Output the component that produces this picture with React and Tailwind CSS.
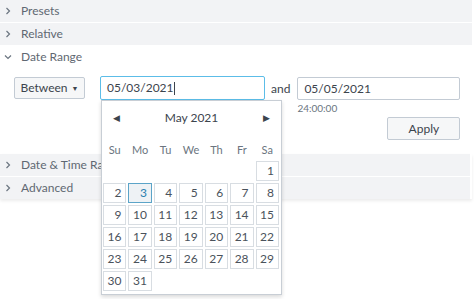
import React from "react";

const font = { fontFamily: "Lato, 'Open Sans', Arial, sans-serif" };

function Chevron({ open }) {
  return (
    <svg width="8" height="8" viewBox="0 0 8 8" className="shrink-0">
      {open ? (
        <path d="M1 2.5 L4 5.5 L7 2.5" fill="none" stroke="#6b7580" strokeWidth="1.2" />
      ) : (
        <path d="M2.5 1 L5.5 4 L2.5 7" fill="none" stroke="#6b7580" strokeWidth="1.2" />
      )}
    </svg>
  );
}

function Section({ label, open, white }) {
  return (
    <div
      className={`h-[22px] mr-[2px] flex items-center gap-[9px] pl-[4px] text-[12px] text-[#5f6872] ${
        white ? "bg-white" : "bg-[#f2f3f5]"
      }`}
    >
      <Chevron open={open} />
      <span>{label}</span>
    </div>
  );
}

const weekdays = ["Su", "Mo", "Tu", "We", "Th", "Fr", "Sa"];

function Calendar() {
  const cells = [];
  for (let i = 0; i < 6; i++) cells.push(null);
  for (let d = 1; d <= 31; d++) cells.push(d);

  return (
    <div className="absolute left-[1px] top-full w-[181px] h-[195px] bg-white border border-[#c8ced5] shadow-[0_2px_4px_rgba(0,0,0,0.15)] z-10">
      <div className="h-[33px] flex items-center justify-between px-[11px] text-[#3c444d]">
        <span className="text-[9px]">◀</span>
        <span className="text-[12px]">May 2021</span>
        <span className="text-[9px]">▶</span>
      </div>
      <div className="mt-[6px] grid grid-cols-7 gap-x-[2px] w-[176px] ml-[1px] h-[20px] leading-[20px] text-[11px] text-[#6b7580] text-center">
        {weekdays.map((w) => (
          <div key={w}>{w}</div>
        ))}
      </div>
      <div className="mt-[1px] ml-[1px] grid grid-cols-7 gap-[2px] w-[176px]">
        {cells.map((d, i) =>
          d === null ? (
            <div key={i} className="h-[20px]" />
          ) : (
            <div
              key={i}
              className={`h-[20px] leading-[18px] text-right pr-[4px] text-[12px] border ${
                d === 3
                  ? "border-[#5ba4c8] bg-[#eef2f5] text-[#2a80b0]"
                  : "border-[#d8dde2] text-[#4a525b]"
              }`}
            >
              {d}
            </div>
          )
        )}
      </div>
    </div>
  );
}

export default function App() {
  return (
    <div className="w-[474px] h-[299px] bg-white overflow-hidden" style={font}>
      <div className="flex flex-col gap-[1px]">
        <Section label="Presets" />
        <Section label="Relative" />
        <Section label="Date Range" open white />
      </div>

      <div className="h-[86px] pl-[14px] pt-[8px] flex items-start">
        <button className="w-[71px] h-[22px] mt-[1px] rounded-[2px] border border-[#c3cbd4] bg-[#f6f7f8] text-[12px] text-[#3c444d] flex items-center justify-center gap-[4px]">
          Between <span className="text-[7px]">▼</span>
        </button>
        <div className="relative ml-[15px]">
          <div className="w-[165px] h-[24px] rounded-[2px] border border-[#5cbde8] flex items-center pl-[6px] text-[12px] text-[#3c444d]">
            05/03/2021<span className="w-px h-[13px] bg-[#3c444d]" />
          </div>
          <Calendar />
        </div>
        <span className="ml-[6px] mt-[4px] text-[12px] text-[#3c444d]">and</span>
        <div className="ml-[7px] flex flex-col items-end">
          <div className="w-[163px] h-[23px] mt-[1px] rounded-[2px] border border-[#c3cbd4] flex items-center pl-[6px] text-[12px] text-[#3c444d]">
            05/05/2021
          </div>
          <div className="self-start mt-[1px] text-[10px] text-[#6b7580]">24:00:00</div>
          <button className="mt-[1px] w-[73px] h-[23px] rounded-[2px] border border-[#c3cbd4] bg-[#f6f7f8] text-[12px] text-[#3c444d]">
            Apply
          </button>
        </div>
      </div>

      <div className="flex flex-col gap-[1px] shadow-[0_2px_3px_rgba(0,0,0,0.08)] mr-[2px]">
        <Section label="Date & Time Range" />
        <Section label="Advanced" />
      </div>
    </div>
  );
}
